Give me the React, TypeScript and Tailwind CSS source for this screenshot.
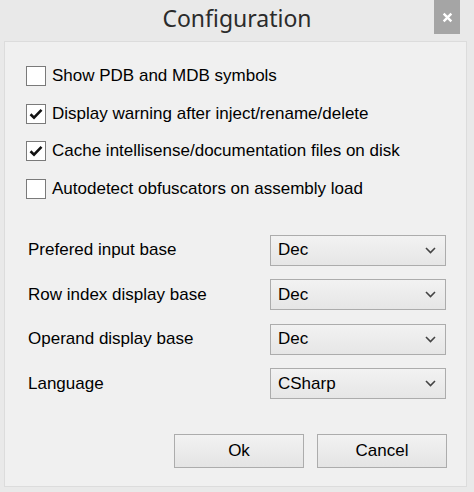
import React from "react";

const checks = [
  { label: "Show PDB and MDB symbols", checked: false },
  { label: "Display warning after inject/rename/delete", checked: true },
  { label: "Cache intellisense/documentation files on disk", checked: true },
  { label: "Autodetect obfuscators on assembly load", checked: false },
];

const selects = [
  { label: "Prefered input base", value: "Dec" },
  { label: "Row index display base", value: "Dec" },
  { label: "Operand display base", value: "Dec" },
  { label: "Language", value: "CSharp" },
];

function CheckBox({ checked }: { checked: boolean }) {
  return (
    <div className="w-[20px] h-[20px] border border-[#7a7a7a] bg-white flex items-center justify-center shrink-0">
      {checked && (
        <svg width="14" height="12" viewBox="0 0 14 12">
          <path d="M1.5 6.2 L5 9.6 L12.5 1.8" fill="none" stroke="#111" strokeWidth="2.6" />
        </svg>
      )}
    </div>
  );
}

function Select({ value }: { value: string }) {
  return (
    <div className="w-[176px] h-[31px] border border-[#acacac] bg-gradient-to-b from-[#f2f2f2] to-[#e6e6e6] flex items-center justify-between pl-[7px] pr-[9px]">
      <span className="text-[17px] text-black">{value}</span>
      <svg width="11" height="7" viewBox="0 0 11 7">
        <path d="M1 1 L5.5 5.5 L10 1" fill="none" stroke="#444" strokeWidth="1.6" />
      </svg>
    </div>
  );
}

export default function App() {
  return (
    <div className="w-[474px] h-[492px] bg-[#e9e9e9] flex flex-col font-['Liberation_Sans',Arial,sans-serif] overflow-hidden">
      <div className="h-[41px] flex items-start relative shrink-0">
        <div className="flex-1 text-center pt-[1px] text-[23px] text-[#2b2b2b] font-['Noto_Sans','Open_Sans',sans-serif]">
          Configuration
        </div>
        <div className="absolute right-[14px] top-0 w-[26px] h-[34px] bg-[#a5a5a5] flex items-center justify-center">
          <svg width="11" height="11" viewBox="0 0 10 10">
            <path d="M1.5 1.5 L8.5 8.5 M8.5 1.5 L1.5 8.5" stroke="#fff" strokeWidth="2.2" />
          </svg>
        </div>
      </div>
      <div className="ml-[4px] mr-[7px] mb-[5px] flex-1 bg-[#f0f0f0] border border-[#dcdcdc] flex flex-col">
        <div className="pl-[21px] pt-[24px] flex flex-col gap-[17.5px]">
          {checks.map((c) => (
            <div key={c.label} className="flex items-center gap-[6px] h-[20px]">
              <CheckBox checked={c.checked} />
              <span className="text-[17px] text-black">{c.label}</span>
            </div>
          ))}
        </div>
        <div className="pl-[23px] pr-[20px] pt-[36px] flex flex-col gap-[13.5px]">
          {selects.map((s) => (
            <div key={s.label} className="flex items-center justify-between">
              <span className="text-[17px] text-black">{s.label}</span>
              <Select value={s.value} />
            </div>
          ))}
        </div>
        <div className="flex justify-end gap-[13px] pr-[19px] pt-[35px]">
          {["Ok", "Cancel"].map((b) => (
            <div
              key={b}
              className="w-[130px] h-[34px] border border-[#acacac] bg-gradient-to-b from-[#f2f2f2] to-[#e4e4e4] flex items-center justify-center text-[17px] text-black"
            >
              {b}
            </div>
          ))}
        </div>
      </div>
    </div>
  );
}
